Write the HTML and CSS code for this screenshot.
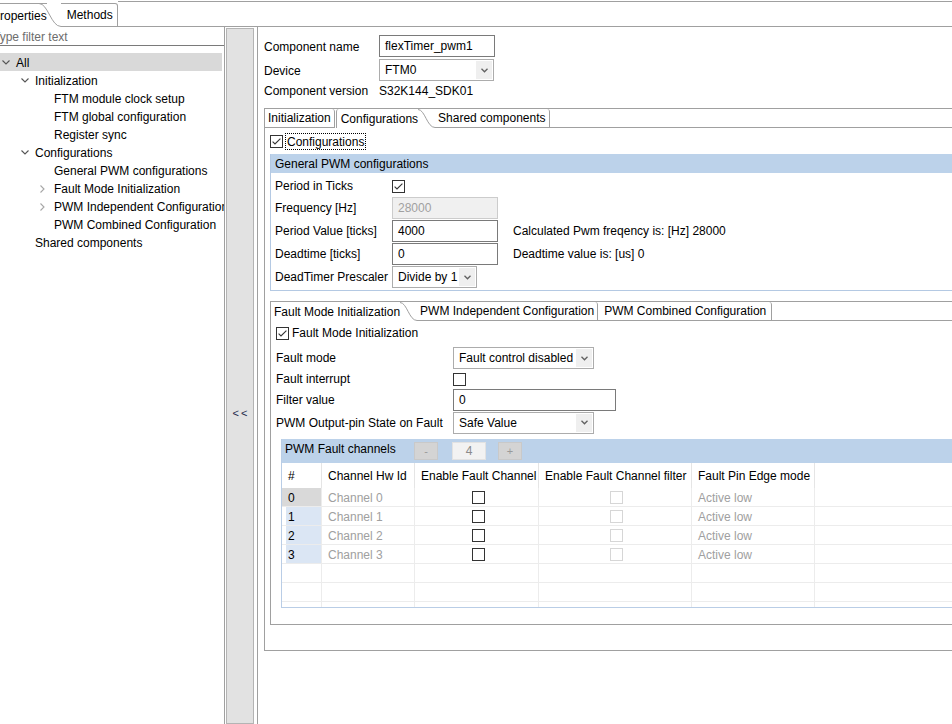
FILE: index.html
```html
<!DOCTYPE html>
<html>
<head>
<meta charset="utf-8">
<title>Component Inspector</title>
<link rel="stylesheet" href="styles.css">
</head>
<body>
<div class="app">
  <div class="topstrip">
    <div class="ttab-active">
      <span class="ttab-label">Properties</span>
      <svg class="tcurve" width="22" height="24" viewBox="0 0 22 24"><path d="M0 0.5 C9 0.5 12 23.5 22 23.5" fill="none" stroke="#a0a0a0"/></svg>
    </div>
    <div class="ttab-plain">Methods</div>
    <div class="ttab-fill"></div>
  </div>

  <div class="body">
    <div class="left">
      <div class="filter"><span class="filter-text">Type filter text</span></div>
      <div class="tree">
        <div class="node lvl0 sel"><span class="tog"><svg class="chev-d" width="8" height="5" viewBox="0 0 8 5"><path d="M0.5 0.5 L4 4 L7.5 0.5" fill="none" stroke="#555" stroke-width="1.1"/></svg></span><span>All</span></div>
        <div class="node lvl1"><span class="tog"><svg class="chev-d" width="8" height="5" viewBox="0 0 8 5"><path d="M0.5 0.5 L4 4 L7.5 0.5" fill="none" stroke="#555" stroke-width="1.1"/></svg></span><span>Initialization</span></div>
        <div class="node lvl2"><span class="tog"></span><span>FTM module clock setup</span></div>
        <div class="node lvl2"><span class="tog"></span><span>FTM global configuration</span></div>
        <div class="node lvl2"><span class="tog"></span><span>Register sync</span></div>
        <div class="node lvl1"><span class="tog"><svg class="chev-d" width="8" height="5" viewBox="0 0 8 5"><path d="M0.5 0.5 L4 4 L7.5 0.5" fill="none" stroke="#555" stroke-width="1.1"/></svg></span><span>Configurations</span></div>
        <div class="node lvl2"><span class="tog"></span><span>General PWM configurations</span></div>
        <div class="node lvl2"><span class="tog"><svg class="chev-r" width="5" height="8" viewBox="0 0 5 8"><path d="M0.5 0.5 L4 4 L0.5 7.5" fill="none" stroke="#a6a6a6" stroke-width="1.1"/></svg></span><span>Fault Mode Initialization</span></div>
        <div class="node lvl2"><span class="tog"><svg class="chev-r" width="5" height="8" viewBox="0 0 5 8"><path d="M0.5 0.5 L4 4 L0.5 7.5" fill="none" stroke="#a6a6a6" stroke-width="1.1"/></svg></span><span>PWM Independent Configuration</span></div>
        <div class="node lvl2"><span class="tog"></span><span>PWM Combined Configuration</span></div>
        <div class="node lvl1"><span class="tog"></span><span>Shared components</span></div>
      </div>
    </div>

    <div class="splitter"><span>&lt;&lt;</span></div>

    <div class="main">
      <div class="frow">
        <span class="flabel">Component name</span>
        <div class="input w-name">flexTimer_pwm1</div>
      </div>
      <div class="frow r2">
        <span class="flabel">Device</span>
        <div class="select w-dev"><span class="sel-text">FTM0</span><span class="sel-arrow"><svg width="7" height="5" viewBox="0 0 7 5"><path d="M0.5 0.8 L3.5 3.8 L6.5 0.8" fill="none" stroke="#606060" stroke-width="1.3"/></svg></span></div>
      </div>
      <div class="frow ver">
        <span class="flabel">Component version</span>
        <span class="ver-val">S32K144_SDK01</span>
      </div>

      <div class="folder f1">
        <div class="ftabs">
          <div class="ft">Initialization</div>
          <div class="ft act"><span>Configurations</span><svg class="ft-curve" width="17" height="19" viewBox="0 0 17 19"><path d="M0 0.5 C7 0.5 9 18.5 17 18.5" fill="none" stroke="#a0a0a0"/></svg></div>
          <div class="ft">Shared components</div>
          <div class="ft-fill"></div>
        </div>
        <div class="fbody1">
          <div class="cbrow">
            <svg class="cb" width="13" height="13" viewBox="0 0 13 13"><rect x="0.5" y="0.5" width="12" height="12" fill="#fff" stroke="#333"/><path d="M2.6 6.6 L5 9 L10.4 3.6" fill="none" stroke="#333" stroke-width="1.1"/></svg>
            <span class="focus">Configurations</span>
          </div>

          <div class="group">
            <div class="gbar">General PWM configurations</div>
            <div class="gbody">
              <div class="cell">Period in Ticks</div>
              <div class="cell"><svg class="cb" width="13" height="13" viewBox="0 0 13 13"><rect x="0.5" y="0.5" width="12" height="12" fill="#fff" stroke="#333"/><path d="M2.6 6.6 L5 9 L10.4 3.6" fill="none" stroke="#333" stroke-width="1.1"/></svg></div>
              <div class="cell"></div>

              <div class="cell">Frequency [Hz]</div>
              <div class="cell"><div class="input dis w-val">28000</div></div>
              <div class="cell"></div>

              <div class="cell">Period Value [ticks]</div>
              <div class="cell"><div class="input w-val">4000</div></div>
              <div class="cell">Calculated Pwm freqency is: [Hz] 28000</div>

              <div class="cell">Deadtime [ticks]</div>
              <div class="cell"><div class="input w-val">0</div></div>
              <div class="cell">Deadtime value is: [us] 0</div>

              <div class="cell">DeadTimer Prescaler</div>
              <div class="cell"><div class="select w-pre"><span class="sel-text">Divide by 1</span><span class="sel-arrow"><svg width="7" height="5" viewBox="0 0 7 5"><path d="M0.5 0.8 L3.5 3.8 L6.5 0.8" fill="none" stroke="#606060" stroke-width="1.3"/></svg></span></div></div>
              <div class="cell"></div>
            </div>
          </div>

          <div class="folder f2">
            <div class="ftabs">
              <div class="ft act first"><span>Fault Mode Initialization</span><svg class="ft-curve" width="17" height="19" viewBox="0 0 17 19"><path d="M0 0.5 C7 0.5 9 18.5 17 18.5" fill="none" stroke="#a0a0a0"/></svg></div>
              <div class="ft">PWM Independent Configuration</div>
              <div class="ft wide">PWM Combined Configuration</div>
              <div class="ft-fill"></div>
            </div>
            <div class="fbody2">
              <div class="cbrow">
                <svg class="cb" width="13" height="13" viewBox="0 0 13 13"><rect x="0.5" y="0.5" width="12" height="12" fill="#fff" stroke="#333"/><path d="M2.6 6.6 L5 9 L10.4 3.6" fill="none" stroke="#333" stroke-width="1.1"/></svg>
                <span class="cblabel">Fault Mode Initialization</span>
              </div>

              <div class="fgrid">
                <div class="cell">Fault mode</div>
                <div class="cell"><div class="select w-fm"><span class="sel-text">Fault control disabled</span><span class="sel-arrow"><svg width="7" height="5" viewBox="0 0 7 5"><path d="M0.5 0.8 L3.5 3.8 L6.5 0.8" fill="none" stroke="#606060" stroke-width="1.3"/></svg></span></div></div>

                <div class="cell">Fault interrupt</div>
                <div class="cell"><svg class="cb" width="13" height="13" viewBox="0 0 13 13"><rect x="0.5" y="0.5" width="12" height="12" fill="#fff" stroke="#333"/></svg></div>

                <div class="cell">Filter value</div>
                <div class="cell"><div class="input w-filter">0</div></div>

                <div class="cell">PWM Output-pin State on Fault</div>
                <div class="cell"><div class="select w-fm"><span class="sel-text">Safe Value</span><span class="sel-arrow"><svg width="7" height="5" viewBox="0 0 7 5"><path d="M0.5 0.8 L3.5 3.8 L6.5 0.8" fill="none" stroke="#606060" stroke-width="1.3"/></svg></span></div></div>
              </div>

              <div class="group2">
                <div class="gbar2">
                  <span class="gtitle">PWM Fault channels</span>
                  <span class="sbtn">-</span>
                  <span class="snum">4</span>
                  <span class="sbtn">+</span>
                </div>
                <div class="thead">
                  <div class="th">#</div>
                  <div class="th">Channel Hw Id</div>
                  <div class="th">Enable Fault Channel</div>
                  <div class="th">Enable Fault Channel filter</div>
                  <div class="th">Fault Pin Edge mode</div>
                  <div class="th"></div>
                </div>
                <div class="tbody">
                  <div class="tr">
                    <div class="td num"><span class="nb g">0</span></div>
                    <div class="td">Channel 0</div>
                    <div class="td c"><svg class="cb" width="13" height="13" viewBox="0 0 13 13"><rect x="0.5" y="0.5" width="12" height="12" fill="#fff" stroke="#333"/></svg></div>
                    <div class="td c"><svg class="cb" width="13" height="13" viewBox="0 0 13 13"><rect x="0.5" y="0.5" width="12" height="12" fill="#fff" stroke="#d6d6d6"/></svg></div>
                    <div class="td">Active low</div>
                    <div class="td"></div>
                  </div>
                  <div class="tr">
                    <div class="td num"><span class="nb b">1</span></div>
                    <div class="td">Channel 1</div>
                    <div class="td c"><svg class="cb" width="13" height="13" viewBox="0 0 13 13"><rect x="0.5" y="0.5" width="12" height="12" fill="#fff" stroke="#333"/></svg></div>
                    <div class="td c"><svg class="cb" width="13" height="13" viewBox="0 0 13 13"><rect x="0.5" y="0.5" width="12" height="12" fill="#fff" stroke="#d6d6d6"/></svg></div>
                    <div class="td">Active low</div>
                    <div class="td"></div>
                  </div>
                  <div class="tr">
                    <div class="td num"><span class="nb b">2</span></div>
                    <div class="td">Channel 2</div>
                    <div class="td c"><svg class="cb" width="13" height="13" viewBox="0 0 13 13"><rect x="0.5" y="0.5" width="12" height="12" fill="#fff" stroke="#333"/></svg></div>
                    <div class="td c"><svg class="cb" width="13" height="13" viewBox="0 0 13 13"><rect x="0.5" y="0.5" width="12" height="12" fill="#fff" stroke="#d6d6d6"/></svg></div>
                    <div class="td">Active low</div>
                    <div class="td"></div>
                  </div>
                  <div class="tr">
                    <div class="td num"><span class="nb b">3</span></div>
                    <div class="td">Channel 3</div>
                    <div class="td c"><svg class="cb" width="13" height="13" viewBox="0 0 13 13"><rect x="0.5" y="0.5" width="12" height="12" fill="#fff" stroke="#333"/></svg></div>
                    <div class="td c"><svg class="cb" width="13" height="13" viewBox="0 0 13 13"><rect x="0.5" y="0.5" width="12" height="12" fill="#fff" stroke="#d6d6d6"/></svg></div>
                    <div class="td">Active low</div>
                    <div class="td"></div>
                  </div>
                  <div class="tr"><div class="td"></div><div class="td"></div><div class="td"></div><div class="td"></div><div class="td"></div><div class="td"></div></div>
                  <div class="tr"><div class="td"></div><div class="td"></div><div class="td"></div><div class="td"></div><div class="td"></div><div class="td"></div></div>
                  <div class="tr"><div class="td"></div><div class="td"></div><div class="td"></div><div class="td"></div><div class="td"></div><div class="td"></div></div>
                </div>
              </div>
            </div>
          </div>
        </div>
      </div>
    </div>
  </div>
</div>
</body>
</html>
```
FILE: styles.css
```css
* { box-sizing: border-box; }
html, body { margin: 0; padding: 0; }
body {
  width: 952px;
  height: 724px;
  overflow: hidden;
  background: #fff;
  font-family: "Liberation Sans", Arial, sans-serif;
  font-size: 12px;
  line-height: 14px;
  color: #000;
}
.app { display: flex; flex-direction: column; height: 724px; }

/* top tab strip */
.topstrip { display: flex; height: 27px; flex: none; white-space: nowrap; }
.ttab-active { display: flex; margin-left: -8px; margin-top: 3px; height: 24px; flex: none; }
.ttab-label { border-top: 1px solid #a0a0a0; display: flex; align-items: center; height: 24px; background: #fff; }
.tcurve { display: block; flex: none; margin-left: -8px; }
.ttab-plain {
  margin-top: 3px; height: 24px; flex: none;
  border-top: 1px solid #a0a0a0; border-right: 1px solid #a0a0a0; border-bottom: 1px solid #a0a0a0;
  border-top-right-radius: 3px;
  padding: 0 4px 0 6px; display: flex; align-items: center;
}
.ttab-fill { flex: 1; margin-top: 1px; height: 26px; border-top: 1px solid #a0a0a0; border-bottom: 1px solid #a0a0a0; }

.body { display: flex; flex: 1; min-height: 0; }

/* left tree */
.left { width: 225px; flex: none; border-right: 1px solid #a0a0a0; overflow: hidden; }
.filter { height: 19px; border-bottom: 1px solid #7a7a7a; display: flex; align-items: center; white-space: nowrap; overflow: hidden; }
.filter-text { margin-left: -7px; color: #6d6d6d; padding-top: 1px; }
.tree { padding-top: 7px; }
.node { display: flex; align-items: center; height: 18px; padding-top: 2px; white-space: nowrap; margin-right: 2px; }
.node.sel { background: #d9d9d9; }
.lvl0 { padding-left: 3px; }
.lvl1 { padding-left: 22px; }
.lvl2 { padding-left: 41px; }
.tog { width: 13px; flex: none; display: flex; align-items: center; margin-top: -1px; }
.tog svg { display: block; margin-left: -1px; }

/* splitter */
.splitter {
  width: 28px; flex: none;
  margin: 1px 3px 0 1px;
  border: 1px solid #b4b4b4;
  background: #e2e2e2;
  display: flex; justify-content: center;
  padding-top: 377px; padding-left: 2px;
  font-size: 11px; letter-spacing: 2px; color: #1e2a4a;
}

/* main */
.main { flex: 1; min-width: 0; border-left: 1px solid #a0a0a0; padding: 8px 0 0 6px; overflow: hidden; }
.frow { display: flex; align-items: center; height: 22px; margin-bottom: 2px; white-space: nowrap; }
.frow.r2 { margin-bottom: 0; }
.frow.ver { height: 18px; margin-bottom: 9px; }
.flabel { width: 115px; flex: none; padding-top: 2px; }
.ver-val { padding-top: 2px; }

.input { height: 22px; border: 1px solid #7a7a7a; display: flex; align-items: center; padding-left: 5px; background: #fff; white-space: nowrap; flex: none; }
.input.dis { background: #f0f0f0; border-color: #cccccc; color: #a0a0a0; }
.select { height: 22px; border: 1px solid #acacac; display: flex; align-items: center; background: #fff; white-space: nowrap; flex: none; }
.sel-text { flex: 1; padding-left: 5px; }
.sel-arrow { width: 16px; height: 18px; margin-right: 1px; background: #efefef; display: flex; align-items: center; justify-content: center; flex: none; }
.sel-arrow svg { display: block; }
.w-name { width: 116px; }
.w-dev { width: 115px; }
.w-val { width: 106px; }
.w-pre { width: 85px; }
.w-fm { width: 141px; }
.w-filter { width: 163px; }

.cb { display: block; flex: none; }

/* tab folders */
.folder { border: 1px solid #a0a0a0; }
.f1 { margin-right: -12px; }
.f2 { margin-top: 10px; }
.ftabs { display: flex; height: 19px; white-space: nowrap; }
.ft { display: flex; align-items: center; padding: 0 3px; border-bottom: 1px solid #a0a0a0; border-right: 1px solid #a0a0a0; border-top-right-radius: 3px; flex: none; }
.ft.wide { padding: 0 5px 0 6px; }
.ft.act { border: none; border-left: 1px solid #a0a0a0; border-top-left-radius: 3px; border-top-right-radius: 0; margin-left: 1px; padding: 0 0 0 4px; }
.ft.act.first { border-left: none; margin-left: 0; padding-left: 3px; }
.ft-curve { display: block; flex: none; align-self: flex-start; }
.ft-fill { flex: 1; border-bottom: 1px solid #a0a0a0; }

.fbody1 { padding: 4px 0 25px 5px; }
.fbody2 { padding: 3px 0 16px 5px; }
.cbrow { display: flex; align-items: center; height: 18px; white-space: nowrap; }
.focus { margin-left: 2px; border: 1px dotted #000; padding: 1px 1px 0; height: 17px; display: flex; align-items: center; }
.cblabel { margin-left: 3px; }

/* general group */
.group { border: 1px solid #b4c9e3; border-top: none; margin-top: 4px; }
.gbar { height: 19px; background: #bcd2ea; display: flex; align-items: center; padding-left: 4px; white-space: nowrap; }
.gbody {
  padding: 3px 0 2px 4px;
  display: grid;
  grid-template-columns: 117px 121px auto;
  grid-template-rows: 20px 22px 22px 22px 22px;
  row-gap: 1px;
}
.cell { display: flex; align-items: center; white-space: nowrap; }

/* fault form */
.fgrid {
  margin-top: 5px;
  display: grid;
  grid-template-columns: 177px auto;
  grid-template-rows: 22px 20px 22px 23px;
}

/* fault channels group */
.group2 { margin-top: 5px; margin-left: 5px; border: 1px solid #b9cde6; border-top: none; }
.gbar2 { height: 24px; background: #bcd2ea; display: flex; align-items: flex-start; padding: 3px 0 0 3px; white-space: nowrap; }
.gtitle { width: 129px; flex: none; line-height: 14px; }
.sbtn { width: 24px; height: 18px; flex: none; background: #d4d4d4; border: 1px solid #c9c9c9; color: #9a9a9a; display: flex; align-items: center; justify-content: center; font-size: 11px; }
.snum { width: 34px; height: 18px; flex: none; margin: 0 12px 0 14px; background: #f2f2f2; border: 1px solid #e2e2e2; color: #8a8a8a; display: flex; align-items: center; justify-content: center; }

.thead { display: grid; grid-template-columns: 40px 93px 124px 153px 123px 1fr; height: 25px; }
.th { border-right: 1px solid #e5e5e5; display: flex; align-items: center; padding-left: 6px; white-space: nowrap; }
.th:last-child { border-right: none; }
.tbody { height: 119px; overflow: hidden; }
.tr { display: grid; grid-template-columns: 40px 93px 124px 153px 123px 1fr; height: 19px; border-bottom: 1px solid #ececec; }
.td { border-right: 1px solid #ececec; display: flex; align-items: center; padding-left: 6px; padding-top: 1px; color: #a0a0a0; white-space: nowrap; }
.td:last-child { border-right: none; }
.td.c { justify-content: center; padding: 0 0 0 3px; }
.td.num { padding: 0; border-right-color: #ececec; }
.nb { flex: 1; align-self: stretch; display: flex; align-items: center; padding-top: 1px; color: #000; }
.nb.g { background: #d9d9d9; padding-left: 6px; }
.nb.b { background: #dbe6f4; margin-left: 4px; padding-left: 2px; }
```
